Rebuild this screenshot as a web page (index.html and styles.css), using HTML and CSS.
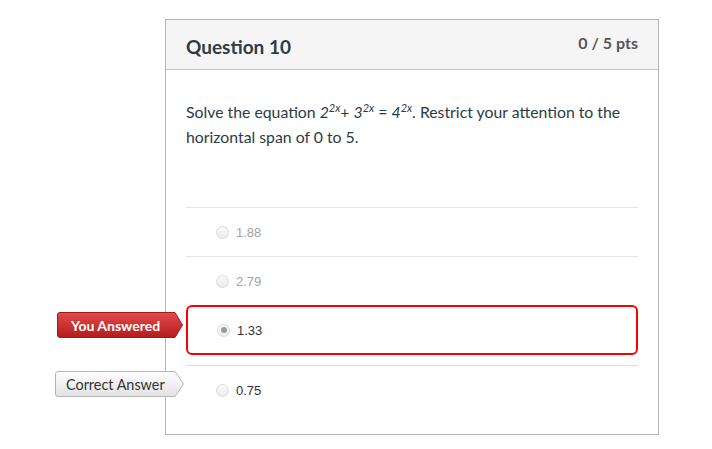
FILE: index.html
```html
<!DOCTYPE html>
<html lang="en">

<head>
    <meta charset="UTF-8">
    <meta name="viewport" content="width=device-width, initial-scale=1.0">
    <title>Question 10</title>
    <link rel="stylesheet" href="styles.css">
</head>

<body>
    <div class="question">
        <div class="question-header">
            <h2 class="question-title">Question 10</h2>
            <div class="points">0 / 5 pts</div>
        </div>
        <div class="question-body">
            <p class="question-text">Solve the equation <em>2<sup>2x</sup></em>+ <em>3<sup>2x</sup></em> = <em>4<sup>2x</sup></em>. Restrict your attention to the horizontal span of 0 to 5.</p>
            <div class="answers">
                <div class="answer">
                    <span class="radio"></span>
                    <span class="answer-text muted">1.88</span>
                </div>
                <div class="answer">
                    <span class="radio"></span>
                    <span class="answer-text muted">2.79</span>
                </div>
                <div class="answer selected wrong">
                    <div class="flag flag-red">
                        <svg class="flag-shape" viewBox="0 0 126 26" width="126" height="26">
                            <defs>
                                <linearGradient id="redgrad" x1="0" y1="0" x2="0" y2="1">
                                    <stop offset="0" stop-color="#e34a4a" />
                                    <stop offset="1" stop-color="#b31d1d" />
                                </linearGradient>
                            </defs>
                            <path d="M3 0.5 H118 L125.5 13 L118 25.5 H3 Q0.5 25.5 0.5 23 V3 Q0.5 0.5 3 0.5 Z" fill="url(#redgrad)" stroke="#a11a1a" />
                        </svg>
                        <span class="flag-label">You Answered</span>
                    </div>
                    <span class="radio checked"></span>
                    <span class="answer-text">1.33</span>
                </div>
                <div class="answer">
                    <div class="flag flag-grey">
                        <svg class="flag-shape" viewBox="0 0 129 26" width="129" height="26">
                            <defs>
                                <linearGradient id="greygrad" x1="0" y1="0" x2="0" y2="1">
                                    <stop offset="0" stop-color="#ffffff" />
                                    <stop offset="1" stop-color="#e2e2e2" />
                                </linearGradient>
                            </defs>
                            <path d="M3 0.5 H120 L128.5 13 L120 25.5 H3 Q0.5 25.5 0.5 23 V3 Q0.5 0.5 3 0.5 Z" fill="url(#greygrad)" stroke="#b5b5b5" />
                        </svg>
                        <span class="flag-label">Correct Answer</span>
                    </div>
                    <span class="radio"></span>
                    <span class="answer-text">0.75</span>
                </div>
            </div>
        </div>
    </div>
</body>

</html>
```

FILE: styles.css
```css
* {
    box-sizing: border-box;
}

body {
    margin: 0;
    padding: 19px 0 0 165px;
    background: #fff;
    font-family: Lato, "Open Sans", sans-serif;
    color: #2d3b45;
}

.question {
    width: 494px;
    border: 1px solid #b3b3b3;
    background: #fff;
}

.question-header {
    height: 50px;
    background: #f5f5f5;
    border-bottom: 1px solid #c4c4c4;
    padding: 0 20px;
    display: flex;
    justify-content: space-between;
    align-items: flex-start;
}

.question-title {
    margin: 16px 0 0;
    font-size: 19px;
    line-height: 22px;
    font-weight: 700;
}

.points {
    margin-top: 13px;
    font-size: 16px;
    line-height: 19px;
    font-weight: 700;
    color: #555;
}

.question-body {
    padding: 29px 20px 20px;
}

.question-text {
    margin: 0 0 58px;
    font-size: 15.8px;
    line-height: 25px;
}

.question-text sup {
    font-size: 11px;
    line-height: 0;
}

.answers {
    display: flex;
    flex-direction: column;
}

.answer {
    position: relative;
    height: 49px;
    border-top: 1px solid #e6e6e6;
    padding-left: 30px;
    display: flex;
    align-items: center;
    gap: 7px;
}

.answer.selected {
    height: 50px;
    border: 2px solid #f00;
    border-radius: 6px;
    padding-left: 29px;
    margin-bottom: 10px;
}

.answer.selected + .answer {
    border-top-color: #dcdcdc;
}

.radio {
    width: 13px;
    height: 13px;
    border-radius: 50%;
    border: 1px solid #dadada;
    background: linear-gradient(#fafafa, #ececec);
    display: flex;
    align-items: center;
    justify-content: center;
}

.radio.checked::after {
    content: "";
    width: 6px;
    height: 6px;
    border-radius: 50%;
    background: #9a9a9a;
}

.answer-text {
    font-family: "Liberation Sans", Arial, sans-serif;
    font-size: 13px;
    color: #333;
}

.answer-text.muted {
    color: #a3a3a3;
}

.flag {
    position: absolute;
    top: 5px;
    height: 26px;
    display: flex;
    align-items: center;
}

.flag-red {
    left: -131px;
}

.flag-grey {
    left: -131px;
}

.flag-shape {
    position: absolute;
    top: 0;
    left: 0;
}

.flag-label {
    position: relative;
    white-space: nowrap;
}

.flag-red .flag-label {
    padding-left: 14px;
    font-size: 14px;
    font-weight: 700;
    color: #fff;
}

.flag-grey .flag-label {
    padding-left: 11px;
    font-size: 14.4px;
    color: #333;
}
```
